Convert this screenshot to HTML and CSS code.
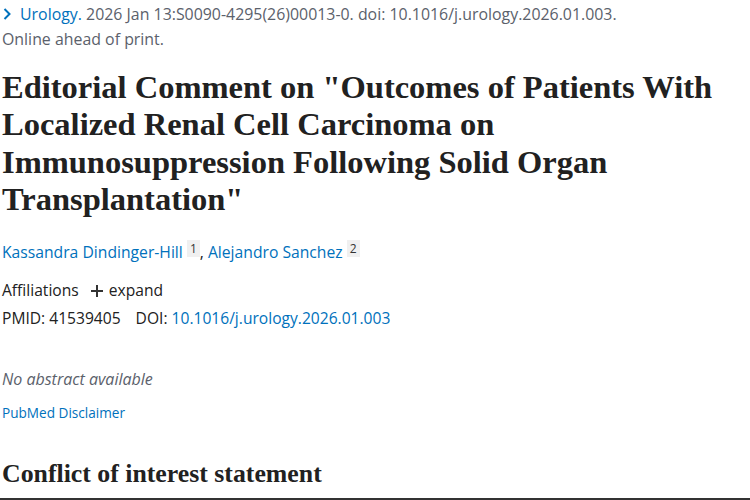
FILE: index.html
```html
<!DOCTYPE html>
<html lang="en">
<head>
<meta charset="utf-8">
<title>PubMed article</title>
<link rel="stylesheet" href="styles.css">
</head>
<body>
<main class="article">
  <div class="citation">
    <span class="chev">
      <svg width="10" height="14" viewBox="0 0 10 14"><path d="M2.5 2 L7.5 7 L2.5 12" fill="none" stroke="#0071bc" stroke-width="2"/></svg>
    </span><a class="journal" href="#">Urology.</a> 2026 Jan 13:S0090-4295(26)00013-0. doi: 10.1016/j.urology.2026.01.003.
  </div>
  <div class="status">Online ahead of print.</div>

  <h1 class="title">Editorial Comment on "Outcomes of Patients With Localized Renal Cell Carcinoma on Immunosuppression Following Solid Organ Transplantation"</h1>

  <div class="authors">
    <a href="#" class="author">Kassandra Dindinger-Hill</a> <sup class="ref">1</sup>, <a href="#" class="author">Alejandro Sanchez</a> <sup class="ref">2</sup>
  </div>

  <div class="affiliations">Affiliations <span class="expand"><svg class="plus" width="12" height="12" viewBox="0 0 12 12"><path d="M6 0 V12 M0 6 H12" stroke="#333" stroke-width="2"/></svg> expand</span></div>
  <div class="ids">PMID: 41539405 <span class="doi">DOI: <a href="#">10.1016/j.urology.2026.01.003</a></span></div>

  <p class="noabstract">No abstract available</p>
  <a class="disclaimer" href="#">PubMed Disclaimer</a>

  <h2 class="section">Conflict of interest statement</h2>
  <div class="rule"></div>
</main>
</body>
</html>
```

FILE: styles.css
```css
html, body {
  margin: 0;
  padding: 0;
  background: #fff;
}
body {
  font-family: "Open Sans", "Noto Sans", sans-serif;
  color: #212121;
  overflow: hidden;
}
a {
  color: #0071bc;
  text-decoration: none;
}
.article {
  padding: 2px 0 0 2px;
}
.citation,
.status {
  font-size: 15.9px;
  line-height: 24px;
  color: #5b616b;
  white-space: nowrap;
}
.chev {
  display: inline-block;
  width: 18px;
  vertical-align: -1px;
}
.title {
  margin: 18px 0 0 0;
  font-family: "Liberation Serif", serif;
  font-weight: bold;
  font-size: 32.5px;
  line-height: 37.3px;
  color: #212121;
  width: 740px;
}
.authors {
  margin-top: 22px;
  font-size: 15.7px;
  line-height: 24px;
}
.ref {
  font-size: 12px;
  color: #333;
  background: #f0f0f0;
  padding: 0 3px;
  vertical-align: 5px;
  line-height: 15px;
}
.affiliations {
  margin-top: 14px;
  font-size: 15.6px;
  line-height: 24px;
}
.expand {
  margin-left: 8px;
}
.plus {
  vertical-align: -1px;
  margin-right: 2px;
}
.ids {
  margin-top: 4px;
  font-size: 15.6px;
  line-height: 24px;
}
.doi {
  margin-left: 11px;
}
.noabstract {
  margin: 37px 0 0 0;
  font-size: 16px;
  line-height: 24px;
  font-style: italic;
  color: #5b616b;
}
.disclaimer {
  display: block;
  margin-top: 12px;
  font-size: 13.6px;
  line-height: 20px;
}
.section {
  margin: 36px 0 0 0;
  font-family: "Liberation Serif", serif;
  font-weight: bold;
  font-size: 25.8px;
  line-height: 30px;
  color: #212121;
}
.rule {
  margin-top: 9px;
  border-top: 3px solid #333;
  width: 750px;
  margin-left: -2px;
}
```
